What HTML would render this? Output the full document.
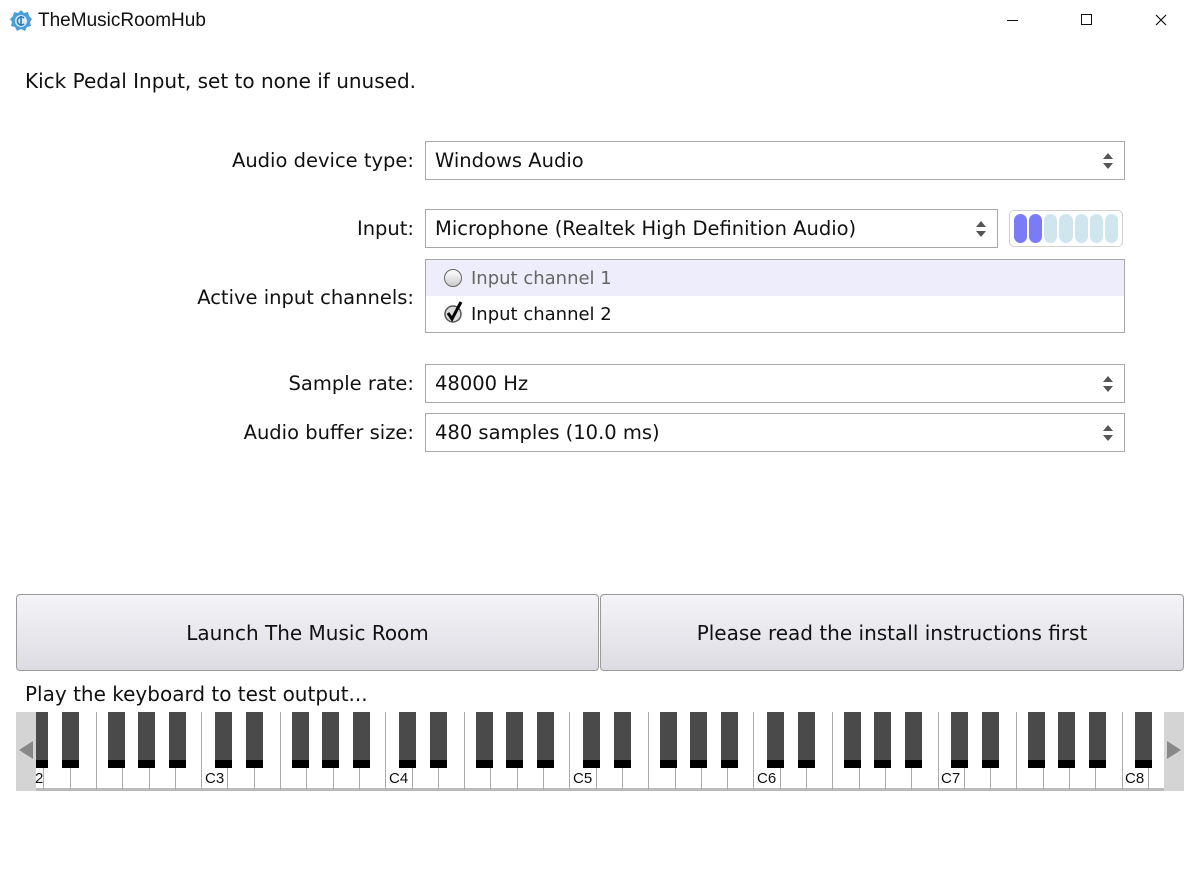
<!DOCTYPE html>
<html><head><meta charset="utf-8"><style>
*{box-sizing:border-box;margin:0;padding:0}
body{width:1200px;height:893px;background:#fff;font-family:"DejaVu Sans","Liberation Sans",sans-serif;color:#111;position:relative;overflow:hidden}
.a{position:absolute}
.lbl{position:absolute;right:786px;font-size:19.5px;white-space:nowrap}
.combo{position:absolute;border:1px solid #a8a8a8;background:#fff;font-size:19.5px;padding-left:9px;display:flex;align-items:center}
.arr{position:absolute;right:10px;top:50%;margin-top:-10px;width:12px;height:20px}
.btn{position:absolute;top:594px;height:77px;border:1px solid #9a9a9a;border-radius:4px;background:linear-gradient(#f4f4f8,#dcdce2);font-size:20px;display:flex;align-items:center;justify-content:center}
</style></head><body>
<svg class="a" style="left:9px;top:9px" width="24" height="24" viewBox="0 0 24 24"><path d="M12 1l3 3 4-1 1 4 3 3-2 3 1 4-4 1-2 4-4-2-4 2-2-4-4-1 1-4-2-3 3-3 1-4 4 1z" fill="#4a9fd8"/><circle cx="12" cy="12" r="6" fill="#d8ecfa"/><path d="M15 9a4 4 0 1 0 0 6M12 7v10" stroke="#2a78b8" stroke-width="1.6" fill="none"/></svg>
<div class="a" style="left:38px;top:10px;font-family:'Liberation Sans',sans-serif;font-size:19px">TheMusicRoomHub</div>
<div class="a" style="left:1007px;top:20px;width:11px;height:1px;background:#111"></div>
<div class="a" style="left:1081px;top:14px;width:11px;height:11px;border:1px solid #111"></div>
<svg class="a" style="left:1155px;top:14px" width="12" height="12"><path d="M1 1L11 11M11 1L1 11" stroke="#111" stroke-width="1.2"/></svg>
<div class="a" style="left:25px;top:69px;font-size:20px">Kick Pedal Input, set to none if unused.</div>

<div class="lbl" style="top:149px">Audio device type:</div>
<div class="combo" style="left:425px;top:141px;width:700px;height:39px">Windows Audio<svg class="arr" viewBox="0 0 12 20"><path d="M1 8L6 2 11 8zM1 12L6 18 11 12z" fill="#555"/></svg></div>

<div class="lbl" style="top:217px">Input:</div>
<div class="combo" style="left:425px;top:209px;width:573px;height:39px">Microphone (Realtek High Definition Audio)<svg class="arr" viewBox="0 0 12 20"><path d="M1 8L6 2 11 8zM1 12L6 18 11 12z" fill="#555"/></svg></div>
<div class="a" style="left:1009px;top:210px;width:114px;height:37px;border:1px solid #d0d0d0;border-radius:5px;display:flex;gap:2px;padding:3px 4px">
<div style="flex:1;background:#7b7bf7;border-radius:7px"></div><div style="flex:1;background:#7b7bf7;border-radius:7px"></div><div style="flex:1;background:#cfe6ee;border-radius:7px"></div><div style="flex:1;background:#cfe6ee;border-radius:7px"></div><div style="flex:1;background:#cfe6ee;border-radius:7px"></div><div style="flex:1;background:#cfe6ee;border-radius:7px"></div><div style="flex:1;background:#cfe6ee;border-radius:7px"></div></div>

<div class="lbl" style="top:286px">Active input channels:</div>
<div class="a" style="left:425px;top:259px;width:700px;height:74px;border:1px solid #a8a8a8;background:#fff">
<div style="height:36px;background:#ededfc;display:flex;align-items:center;padding-left:18px;font-size:18px;color:#666"><span style="display:inline-block;width:18px;height:18px;border-radius:50%;border:1.5px solid #666;background:linear-gradient(#fff,#ccc);margin-right:9px"></span>Input channel 1</div>
<div style="height:36px;display:flex;align-items:center;padding-left:18px;font-size:18px"><svg width="20" height="22" style="margin-right:7px;margin-top:-4px" viewBox="0 0 20 22"><circle cx="9" cy="13" r="8" fill="#ddd" stroke="#555" stroke-width="1.5"/><path d="M4 12l4 6 9-17" stroke="#000" stroke-width="3" fill="none"/></svg>Input channel 2</div></div>

<div class="lbl" style="top:372px">Sample rate:</div>
<div class="combo" style="left:425px;top:364px;width:700px;height:39px">48000 Hz<svg class="arr" viewBox="0 0 12 20"><path d="M1 8L6 2 11 8zM1 12L6 18 11 12z" fill="#555"/></svg></div>
<div class="lbl" style="top:421px">Audio buffer size:</div>
<div class="combo" style="left:425px;top:413px;width:700px;height:39px">480 samples (10.0 ms)<svg class="arr" viewBox="0 0 12 20"><path d="M1 8L6 2 11 8zM1 12L6 18 11 12z" fill="#555"/></svg></div>

<div class="btn" style="left:16px;width:583px">Launch The Music Room</div>
<div class="btn" style="left:600px;width:584px">Please read the install instructions first</div>
<div class="a" style="left:25px;top:682px;font-size:20px">Play the keyboard to test output...</div>

<div class="a" style="left:16px;top:712px;width:1168px;height:79px;background:#fff;overflow:hidden" id="kb">
<div class="a" style="left:0;top:0;width:20px;height:79px;background:#d4d4d4"></div>
<div class="a" style="left:1148px;top:0;width:20px;height:79px;background:#d4d4d4"></div>
<svg class="a" style="left:3px;top:29px" width="14" height="18"><path d="M14 0V18L0 9z" fill="#888"/></svg>
<svg class="a" style="left:1151px;top:29px" width="14" height="18"><path d="M0 0V18L14 9z" fill="#888"/></svg>
<div class="a" style="left:20px;top:76px;width:1128px;height:3px;background:#bbb"></div>
</div>
<script>
var kb=document.getElementById('kb'),w=26.3,c2=1,h='';
for(var i=-1;i<46;i++){var x=c2+i*w;if(x>20&&x<1148)h+='<div class="a" style="left:'+x.toFixed(1)+'px;top:0;width:1px;height:78px;background:#aaa"></div>';}
var off=[14,45,91,121,152];
for(var o=-1;o<7;o++){var base=c2+o*184;off.forEach(function(f){var x=base+f;if(x+17>20&&x<1148){var l=Math.max(x,20),r=Math.min(x+17,1148);h+='<div class="a" style="left:'+l.toFixed(1)+'px;top:0;width:'+(r-l).toFixed(1)+'px;height:56px;background:#4a4a4a;border-bottom:8px solid #000"></div>';}});}
for(var n=3;n<=8;n++){var x=c2+(n-2)*184;if(x<1148)h+='<div class="a" style="left:'+(x+4)+'px;top:58px;font-family:Liberation Sans,sans-serif;font-size:15px">C'+n+'</div>';}
h+='<div class="a" style="left:19px;top:58px;font-family:Liberation Sans,sans-serif;font-size:15px">2</div>';
kb.insertAdjacentHTML('beforeend',h);
</script>
</body></html>
